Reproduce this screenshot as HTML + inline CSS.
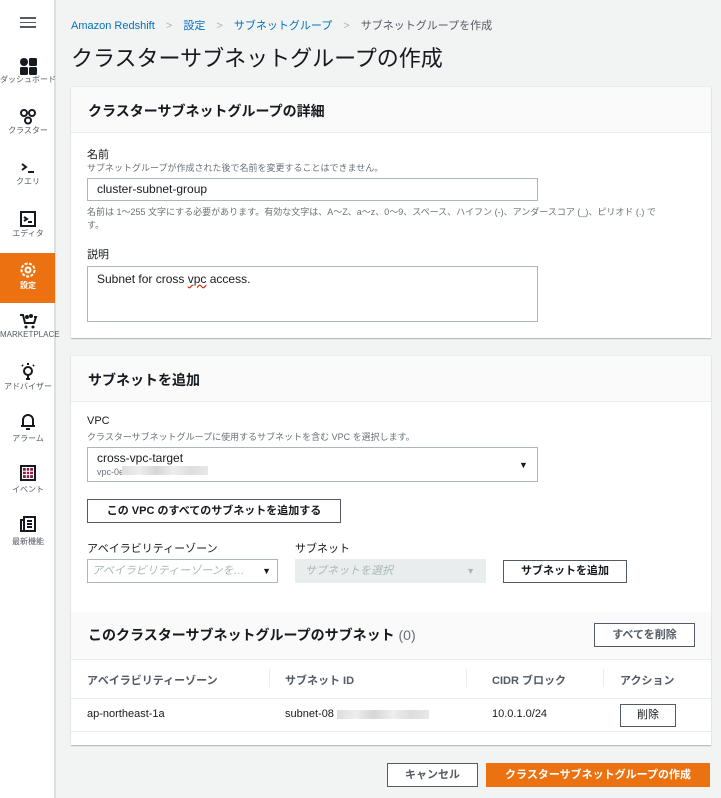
<!DOCTYPE html><html><head><meta charset="utf-8"><style>
*{box-sizing:border-box;margin:0;padding:0}
body{width:721px;height:798px;background:#f2f3f3;font-family:"Liberation Sans","Noto Sans CJK JP",sans-serif;color:#16191f;position:relative;overflow:hidden;font-size:12px}
.a{position:absolute;white-space:nowrap}
.side{position:absolute;left:0;top:0;width:56px;height:798px;background:#fff;border-right:2px solid #dcdedf}
.lbl{position:absolute;left:0;width:56px;text-align:center;font-size:8px;color:#545b64}
.ic{position:absolute;left:18px;width:20px;height:20px}
.card{position:absolute;left:71px;width:640px;background:#fff;box-shadow:0 1px 1px rgba(0,28,36,.3);border-top:1px solid #eaeded}
.hd{position:absolute;left:0;top:0;width:100%;background:#fafafa;border-bottom:1px solid #eaeded}
.h2{font-size:14px;font-weight:bold}
.inp{position:absolute;border:1px solid #aab7b8;background:#fff;font-size:12px;padding-left:9px}
.btn{position:absolute;border:1px solid #545b64;background:#fff;font-size:11px;font-weight:bold;color:#545b64;text-align:center}
.hint{font-size:9px;color:#687078}
.blur{position:absolute;height:9px;background:linear-gradient(90deg,#ddd,#eee,#d6d6d6,#eee,#ddd,#e8e8e8)}
</style></head><body>
<div class="side">
<div class="a" style="left:20px;top:17px;width:16px;height:1.5px;background:#545b64"></div>
<div class="a" style="left:20px;top:21.5px;width:16px;height:1.5px;background:#545b64"></div>
<div class="a" style="left:20px;top:26px;width:16px;height:1.5px;background:#545b64"></div>
<svg class="ic" style="top:56px" viewBox="0 0 20 20"><circle cx="6" cy="6" r="4" fill="#16191f"/><rect x="11" y="2" width="8" height="8" rx="1.5" fill="#16191f"/><rect x="2" y="11" width="8" height="8" rx="1.5" fill="#16191f"/><rect x="11" y="11" width="8" height="8" rx="1.5" fill="#16191f"/></svg>
<div class="lbl" style="top:74px">ダッシュボード</div>
<svg class="ic" style="top:107px" viewBox="0 0 20 20" fill="none" stroke="#16191f" stroke-width="2"><circle cx="6" cy="6" r="3"/><circle cx="14" cy="6" r="3"/><circle cx="10" cy="13.5" r="3"/></svg>
<div class="lbl" style="top:125px">クラスター</div>
<svg class="ic" style="top:158px" viewBox="0 0 20 20" fill="none" stroke="#16191f" stroke-width="2"><path d="M4 6l4 3-4 3"/><path d="M10 14h6"/></svg>
<div class="lbl" style="top:176px">クエリ</div>
<svg class="ic" style="top:209px" viewBox="0 0 20 20" fill="none" stroke="#16191f" stroke-width="2"><rect x="3" y="3" width="14" height="14"/><path d="M6 8l3 2-3 2M10 13h4"/></svg>
<div class="lbl" style="top:228px">エディタ</div>
<div class="a" style="left:0;top:253px;width:55px;height:50px;background:#ec7211"></div>
<svg class="ic" style="top:260px" viewBox="0 0 20 20" fill="none" stroke="#fff" stroke-width="2"><circle cx="10" cy="10" r="6.5" stroke-dasharray="3 1.5"/><circle cx="10" cy="10" r="2.5"/></svg>
<div class="lbl" style="top:280px;color:#fff;font-weight:bold">設定</div>
<svg class="ic" style="top:310px" viewBox="0 0 20 20" fill="#16191f"><path d="M2 5h3l2 8h9l2-6h-2" fill="none" stroke="#16191f" stroke-width="2"/><circle cx="9" cy="7" r="2"/><circle cx="13" cy="6" r="2"/><circle cx="8" cy="17" r="1.5"/><circle cx="15" cy="17" r="1.5"/></svg>
<div class="lbl" style="top:330px">MARKETPLACE</div>
<svg class="ic" style="top:361px" viewBox="0 0 20 20" fill="none" stroke="#16191f" stroke-width="2"><circle cx="10" cy="10" r="4"/><path d="M10 14v4M8 18h4M10 2v2M4 4l1 1M16 4l-1 1"/></svg>
<div class="lbl" style="top:381px">アドバイザー</div>
<svg class="ic" style="top:411px" viewBox="0 0 20 20" fill="none" stroke="#16191f" stroke-width="2"><path d="M5 15V9a5 5 0 0110 0v6M3 15h14M8 18h4"/></svg>
<div class="lbl" style="top:433px">アラーム</div>
<svg class="ic" style="top:463px" viewBox="0 0 20 20"><rect x="3" y="3" width="14" height="14" fill="#fff" stroke="#16191f" stroke-width="2"/><rect x="5" y="5" width="10" height="10" fill="#8c1d40"/><path d="M5 8.3h10M5 11.6h10M8.3 5v10M11.6 5v10" stroke="#fff" stroke-width="1"/></svg>
<div class="lbl" style="top:484px">イベント</div>
<svg class="ic" style="top:514px" viewBox="0 0 20 20" fill="none" stroke="#16191f" stroke-width="2"><rect x="6" y="3" width="11" height="14"/><path d="M6 6H3v11h3M9 7h5M9 10h5M9 13h5"/></svg>
<div class="lbl" style="top:536px">最新機能</div>
</div>

<div class="a" style="left:71px;top:17px;font-size:11px;color:#0073bb">Amazon Redshift <span style="color:#aab7b8;margin:0 8px">&gt;</span> 設定 <span style="color:#aab7b8;margin:0 8px">&gt;</span> サブネットグループ <span style="color:#aab7b8;margin:0 8px">&gt;</span> <span style="color:#545b64">サブネットグループを作成</span></div>
<div class="a" style="left:71px;top:41px;font-size:22px;color:#16191f">クラスターサブネットグループの作成</div>

<div class="card" style="top:86px;height:252px">
<div class="hd" style="height:46px"></div>
<div class="a h2" style="left:17px;top:14px">クラスターサブネットグループの詳細</div>
<div class="a" style="left:16px;top:59px;font-size:11px">名前</div>
<div class="a hint" style="left:16px;top:74px">サブネットグループが作成された後で名前を変更することはできません。</div>
<div class="inp" style="left:16px;top:91px;width:451px;height:23px;line-height:21px">cluster-subnet-group</div>
<div class="a hint" style="left:16px;top:118px">名前は 1〜255 文字にする必要があります。有効な文字は、A〜Z、a〜z、0〜9、スペース、ハイフン (-)、アンダースコア (_)、ピリオド (.) で<br>す。</div>
<div class="a" style="left:16px;top:159px;font-size:11px">説明</div>
<div class="inp" style="left:16px;top:179px;width:451px;height:56px;padding-top:5px">Subnet for cross <span style="text-decoration:underline wavy #d13212">vpc</span> access.</div>
</div>

<div class="card" style="top:355px;height:390px">
<div class="hd" style="height:46px"></div>
<div class="a h2" style="left:17px;top:14px">サブネットを追加</div>
<div class="a" style="left:16px;top:59px;font-size:11px">VPC</div>
<div class="a hint" style="left:16px;top:74px">クラスターサブネットグループに使用するサブネットを含む VPC を選択します。</div>
<div class="inp" style="left:16px;top:91px;width:451px;height:35px;padding-top:4px;line-height:13px">cross-vpc-target<br><span style="font-size:9px;color:#687078">vpc-0e</span></div>
<div class="blur" style="left:51px;top:110px;width:86px"></div>
<div class="a" style="left:448px;top:104px;font-size:9px">▼</div>
<div class="btn" style="left:16px;top:143px;width:254px;height:24px;line-height:22px;color:#16191f">この VPC のすべてのサブネットを追加する</div>
<div class="a" style="left:16px;top:184px;font-size:11px">アベイラビリティーゾーン</div>
<div class="a" style="left:224px;top:184px;font-size:11px">サブネット</div>
<div class="inp" style="left:16px;top:203px;width:191px;height:24px;line-height:22px;font-size:11px;color:#aab7b8;font-style:italic;padding-left:4px">アベイラビリティーゾーンを…<span style="position:absolute;right:6px;color:#16191f;font-style:normal;font-size:9px">▼</span></div>
<div class="inp" style="left:224px;top:203px;width:191px;height:24px;line-height:22px;font-size:11px;color:#aab7b8;font-style:italic;background:#eaeded;border-color:#eaeded">サブネットを選択<span style="position:absolute;right:10px;font-style:normal;font-size:9px">▼</span></div>
<div class="btn" style="left:432px;top:204px;width:124px;height:23px;line-height:21px;color:#16191f">サブネットを追加</div>
<div class="a" style="left:0;top:256px;width:640px;height:48px;background:#fafafa;border-bottom:1px solid #eaeded"></div>
<div class="a h2" style="left:17px;top:269px">このクラスターサブネットグループのサブネット <span style="font-weight:normal;color:#687078">(0)</span></div>
<div class="btn" style="left:523px;top:267px;width:101px;height:24px;line-height:22px">すべてを削除</div>
<div class="a" style="left:0;top:342px;width:640px;height:1px;background:#eaeded"></div>
<div class="a" style="left:198px;top:313px;width:1px;height:18px;background:#eaeded"></div>
<div class="a" style="left:395px;top:313px;width:1px;height:18px;background:#eaeded"></div>
<div class="a" style="left:532px;top:313px;width:1px;height:18px;background:#eaeded"></div>
<div class="a" style="left:16px;top:316px;font-size:11px;font-weight:bold;color:#545b64">アベイラビリティーゾーン</div>
<div class="a" style="left:214px;top:316px;font-size:11px;font-weight:bold;color:#545b64">サブネット ID</div>
<div class="a" style="left:421px;top:316px;font-size:11px;font-weight:bold;color:#545b64">CIDR ブロック</div>
<div class="a" style="left:549px;top:316px;font-size:11px;font-weight:bold;color:#545b64">アクション</div>
<div class="a" style="left:16px;top:352px;font-size:11px">ap-northeast-1a</div>
<div class="a" style="left:214px;top:352px;font-size:11px">subnet-08</div>
<div class="blur" style="left:266px;top:354px;width:92px"></div>
<div class="a" style="left:421px;top:352px;font-size:11px">10.0.1.0/24</div>
<div class="btn" style="left:549px;top:348px;width:56px;height:23px;line-height:21px;font-weight:normal;color:#16191f">削除</div>
<div class="a" style="left:0;top:375px;width:640px;height:1px;background:#eaeded"></div>
</div>

<div class="btn" style="left:387px;top:763px;width:91px;height:24px;line-height:22px;color:#545b64">キャンセル</div>
<div class="a" style="left:486px;top:763px;width:224px;height:24px;line-height:24px;background:#ec7211;color:#fff;font-size:11px;font-weight:bold;text-align:center">クラスターサブネットグループの作成</div>
</body></html>
